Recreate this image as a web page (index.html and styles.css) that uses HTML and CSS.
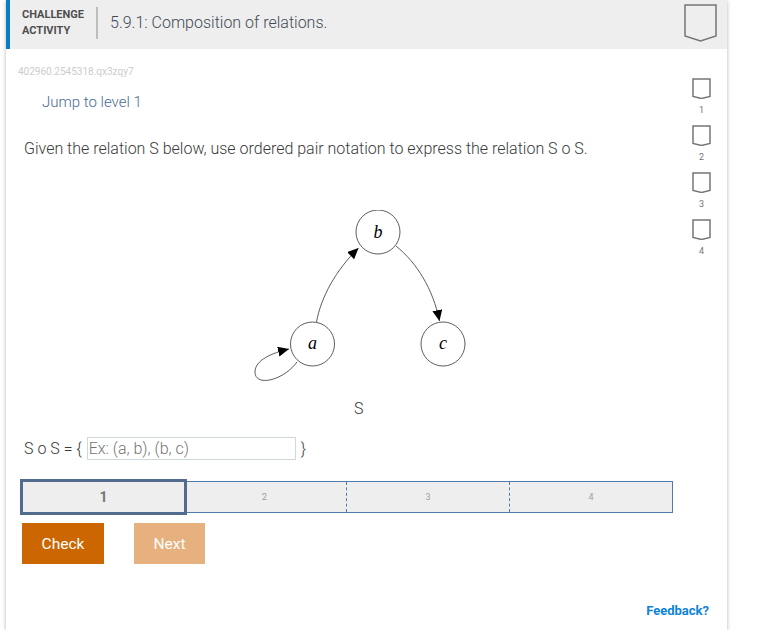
FILE: index.html
```html
<!DOCTYPE html>
<html lang="en">
<head>
    <meta charset="UTF-8">
    <meta name="viewport" content="width=device-width, initial-scale=1.0">
    <title>5.9.1: Composition of relations.</title>
    <link rel="stylesheet" href="styles.css">
</head>
<body>
    <div class="activity">
        <div class="activity-header">
            <div class="activity-label">CHALLENGE<br>ACTIVITY</div>
            <div class="activity-title">5.9.1: Composition of relations.</div>
            <svg class="badge-large" width="34" height="38" viewBox="0 0 34 38">
                <path d="M1 1H32V32L16.500 37L1 32Z"/>
            </svg>
        </div>
        <div class="activity-body">
            <div class="activity-main">
                <div class="activity-id">402960.2545318.qx3zqy7</div>
                <div class="jump-link">Jump to level 1</div>
                <p class="prompt">Given the relation S below, use ordered pair notation to express the relation S o S.</p>
                <svg class="graph" width="240" height="190" viewBox="240 210 240 190">
                    <defs>
                        <marker id="arrow" markerWidth="12" markerHeight="12" refX="11" refY="5" orient="auto" markerUnits="userSpaceOnUse">
                            <path d="M0 0L11 5L0 10Z" fill="#000"/>
                        </marker>
                    </defs>
                    <circle cx="312.500" cy="344" r="22"/>
                    <circle cx="378" cy="232" r="22"/>
                    <circle cx="443" cy="344" r="22"/>
                    <path d="M316.500 322C321 297 336 270 358.500 248" marker-end="url(#arrow)"/>
                    <path d="M396 246C417 263 433 289 439.500 321" marker-end="url(#arrow)"/>
                    <path d="M297 362C283 381 255 387 255 372C255 360 272 353 289 349" marker-end="url(#arrow)"/>
                    <text x="312.500" y="349">a</text>
                    <text x="378" y="238">b</text>
                    <text x="443" y="349">c</text>
                </svg>
                <div class="graph-name">S</div>
                <div class="answer-row">
                    <span>S o S = {</span>
                    <input class="answer-input" type="text" placeholder="Ex: (a, b), (b, c)">
                    <span>}</span>
                </div>
                <div class="levels">
                    <div class="level level-current">1</div>
                    <div class="level">2</div>
                    <div class="level">3</div>
                    <div class="level">4</div>
                </div>
                <div class="buttons">
                    <button class="btn-check">Check</button>
                    <button class="btn-next">Next</button>
                </div>
            </div>
            <div class="level-badges">
                <div class="level-badge">
                    <svg width="19" height="21" viewBox="0 0 19 21"><path d="M1 1H18V18.500L9.500 20.500L1 18.500Z"/></svg>
                    <span>1</span>
                </div>
                <div class="level-badge">
                    <svg width="19" height="21" viewBox="0 0 19 21"><path d="M1 1H18V18.500L9.500 20.500L1 18.500Z"/></svg>
                    <span>2</span>
                </div>
                <div class="level-badge">
                    <svg width="19" height="21" viewBox="0 0 19 21"><path d="M1 1H18V18.500L9.500 20.500L1 18.500Z"/></svg>
                    <span>3</span>
                </div>
                <div class="level-badge">
                    <svg width="19" height="21" viewBox="0 0 19 21"><path d="M1 1H18V18.500L9.500 20.500L1 18.500Z"/></svg>
                    <span>4</span>
                </div>
            </div>
        </div>
        <a class="feedback" href="#">Feedback?</a>
    </div>
</body>
</html>
```

FILE: styles.css
```css
body {
    margin: 0;
    font-family: Roboto, sans-serif;
    background-color: #ffffff;
    color: #4a4a4a;
}
.activity {
    width: 721px;
    height: 630px;
    margin-left: 6px;
    box-shadow: 0 1px 4px rgba(0, 0, 0, 0.3);
    display: flex;
    flex-direction: column;
}
.activity-header {
    height: 49px;
    box-sizing: border-box;
    display: flex;
    align-items: flex-start;
    background-color: #eeeeee;
    border-left: 4px solid #0a7dc2;
    padding-left: 12px;
}
.activity-label {
    width: 74px;
    margin-top: 7px;
    font-size: 11px;
    line-height: 15.500px;
    font-weight: 700;
    color: #4f4f4f;
}
.activity-title {
    height: 32px;
    margin-top: 7px;
    padding-left: 12px;
    border-left: 2px solid #bdbdbd;
    font-size: 16px;
    font-weight: 300;
    line-height: 31px;
    color: #3f4a55;
    flex: 1;
}
.badge-large {
    margin: 4px 9px 0 0;
}
.badge-large path, .level-badge path {
    fill: none;
    stroke: #757575;
    stroke-width: 1.5;
}
.activity-body {
    flex: 1;
    display: flex;
}
.activity-main {
    width: 667px;
    display: flex;
    flex-direction: column;
}
.activity-id {
    margin: 17px 0 0 12px;
    font-size: 10px;
    line-height: 12px;
    color: #cccccc;
}
.jump-link {
    margin: 14px 0 0 36px;
    font-size: 15px;
    font-weight: 300;
    line-height: 20px;
    color: #4a6a94;
}
.prompt {
    margin: 27px 0 0 18px;
    font-size: 16px;
    font-weight: 300;
    line-height: 20px;
    color: #3a3a3a;
    white-space: nowrap;
}
.graph {
    margin: 51px 0 0 234px;
}
.graph circle {
    fill: #ffffff;
    stroke: #333333;
    stroke-width: 0.8;
}
.graph path {
    fill: none;
    stroke: #333333;
    stroke-width: 0.8;
}
.graph marker path {
    stroke: none;
    fill: #000000;
}
.graph text {
    font-family: "Liberation Serif", serif;
    font-style: italic;
    font-size: 18px;
    text-anchor: middle;
    fill: #000000;
}
.graph-name {
    margin: 0 0 0 348px;
    font-size: 16px;
    font-weight: 300;
    line-height: 18px;
    color: #3a3a3a;
}
.answer-row {
    margin: 19px 0 0 18px;
    display: flex;
    align-items: center;
    gap: 5px;
    font-size: 16px;
    font-weight: 300;
    color: #3a3a3a;
}
.answer-input {
    width: 209px;
    height: 23px;
    box-sizing: border-box;
    margin: 0;
    padding: 0 1px;
    border: 1px solid #cfd8dc;
    font-family: Roboto, sans-serif;
    font-size: 16px;
    font-weight: 300;
}
.answer-input::placeholder {
    color: #757575;
    opacity: 1;
}
.levels {
    width: 651px;
    height: 32px;
    box-sizing: border-box;
    margin: 21px 0 0 16px;
    display: flex;
    background-color: #eeeeee;
    border: 1px solid #4f7cac;
}
.level {
    flex: none;
    width: 163px;
    box-sizing: border-box;
    display: flex;
    align-items: center;
    justify-content: center;
    font-size: 9px;
    color: #9e9e9e;
    border-left: 1px dashed #4f7cac;
}
.level:nth-child(2) {
    border-left: none;
}
.level-current {
    width: 167px;
    height: 36px;
    margin: -3px -4px 0 -3px;
    border: 3px solid #536b8f;
    font-size: 14px;
    font-weight: 700;
    color: #757575;
}
.buttons {
    margin: 10px 0 0 16px;
    display: flex;
    gap: 30px;
}
.buttons button {
    height: 41px;
    border: none;
    padding: 0;
    font-family: Roboto, sans-serif;
    font-size: 15.500px;
    color: #ffffff;
}
.btn-check {
    width: 82px;
    background-color: #cc6600;
}
.btn-next {
    width: 71px;
    background-color: #e6b17e;
}
.level-badges {
    padding-top: 29px;
    display: flex;
    flex-direction: column;
    gap: 6px;
    width: 19px;
    margin-left: 19px;
}
.level-badge {
    height: 41px;
    display: flex;
    flex-direction: column;
    align-items: center;
}
.level-badge svg {
    display: block;
}
.level-badge span {
    margin-top: 6px;
    font-size: 9px;
    line-height: 10px;
    color: #757575;
}
.feedback {
    align-self: flex-end;
    margin: 0 18px 12px 0;
    font-size: 13px;
    font-weight: 700;
    line-height: 14px;
    color: #0d84d6;
    text-decoration: none;
}
```
